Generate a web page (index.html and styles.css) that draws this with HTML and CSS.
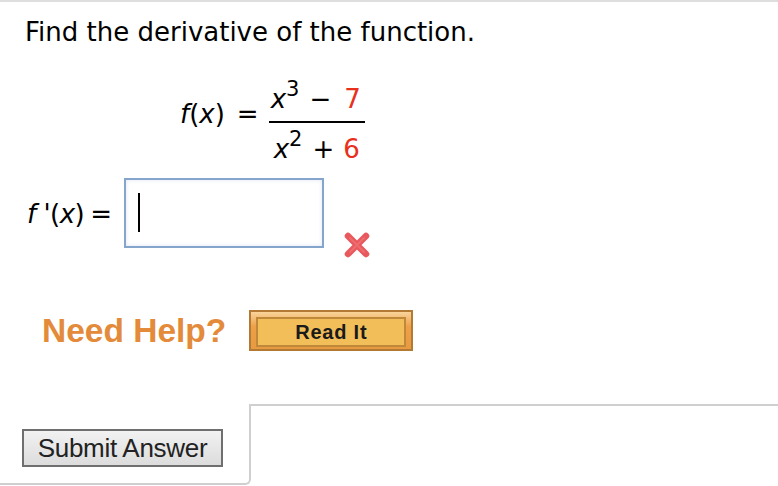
FILE: index.html
```html
<!DOCTYPE html>
<html>
<head>
<meta charset="utf-8">
<link rel="stylesheet" href="styles.css">
</head>
<body>
<div class="page">
  <p class="question">Find the derivative of the function.</p>
  <div class="given">
    <span class="lhs"><i>f</i>(<i>x</i>)<span class="eq">=</span></span>
    <span class="frac">
      <span class="num"><i>x</i><sup>3</sup><span class="op">−</span><span class="red">7</span></span>
      <span class="den"><i>x</i><sup>2</sup><span class="op">+</span><span class="red">6</span></span>
    </span>
  </div>
  <div class="answer">
    <span class="lhs2"><i>f</i> '(<i>x</i>)<span class="eq">=</span></span>
    <div class="box"><span class="caret"></span></div>
    <svg class="wrong" width="28" height="28" viewBox="0 0 28 28">
      <path d="M5 5 L23 23 M23 5 L5 23" stroke="#e9585c" stroke-width="6.5" stroke-linecap="round"/>
      <path d="M7 7 L21 21 M21 7 L7 21" stroke="#f07a7c" stroke-width="2" stroke-linecap="round" opacity="0.6"/>
    </svg>
  </div>
  <div class="help">
    <span class="need">Need Help?</span>
    <span class="readit"><span class="readit-inner">Read It</span></span>
  </div>
  <div class="bottom">
    <div class="left-tab">
      <button class="submit">Submit Answer</button>
    </div>
    <div class="right-tab"></div>
  </div>
</div>
</body>
</html>
```

FILE: styles.css
```css
html, body {
  margin: 0;
  padding: 0;
  background: #fff;
}
.page {
  width: 778px;
  height: 486px;
  border-top: 2px solid #dedede;
  box-sizing: border-box;
  overflow: hidden;
  font-family: "DejaVu Sans", Verdana, sans-serif;
  color: #000;
}
.question {
  margin: 0;
  padding: 14px 0 0 25px;
  font-size: 26px;
  line-height: 32px;
  height: 32px;
}
.given {
  display: flex;
  align-items: flex-start;
  margin: 36px 0 0 180px;
  font-size: 26px;
}
.lhs {
  margin-top: 15px;
  line-height: 30px;
  margin-right: 10px;
}
.eq {
  margin-left: 12px;
}
.frac {
  display: inline-flex;
  flex-direction: column;
  align-items: center;
}
.num, .den {
  line-height: 30px;
  display: block;
}
.num {
  border-bottom: 2px solid #000;
  padding: 0 4px 7px 2px;
}
.den {
  padding-top: 11px;
  height: 30px;
}
.op {
  margin: 0 9px 0 10px;
}
.num .op {
  margin: 0 13px 0 10px;
}
sup {
  font-size: 21px;
  vertical-align: 12px;
  line-height: 0;
}
.red {
  color: #e8301c;
}
.answer {
  display: flex;
  align-items: flex-start;
  margin: 14px 0 0 27px;
  font-size: 26px;
  height: 70px;
}
.lhs2 {
  margin-top: 21px;
  line-height: 30px;
  margin-right: 12px;
  letter-spacing: -0.5px;
}
.lhs2 .eq {
  margin-left: 6px;
}
.box {
  width: 200px;
  height: 70px;
  box-sizing: border-box;
  border: 2px solid #85a5cc;
  box-shadow: inset 0 0 4px #dfe7f2;
  position: relative;
}
.caret {
  position: absolute;
  left: 12px;
  top: 13px;
  width: 2px;
  height: 39px;
  background: #000;
}
.wrong {
  margin: 53px 0 0 19px;
  flex: none;
}
.help {
  display: flex;
  align-items: center;
  margin: 62px 0 0 42px;
  height: 41px;
}
.need {
  font-family: "Liberation Sans", Arial, sans-serif;
  font-weight: bold;
  font-size: 33.5px;
  line-height: 38px;
  color: #e38b3a;
}
.readit {
  margin-left: 23px;
  width: 164px;
  height: 41px;
  box-sizing: border-box;
  border: 2px solid #b27a35;
  background: linear-gradient(#f9d39a, #eda046 40%, #e89a40);
  padding: 5px 5px 2px 5px;
  display: flex;
}
.readit-inner {
  flex: 1;
  border: 2px solid #c0883a;
  background: #f2be5a;
  font-family: "Liberation Sans", Arial, sans-serif;
  font-weight: bold;
  font-size: 20px;
  letter-spacing: 0.8px;
  color: #1a1a1a;
  display: flex;
  align-items: center;
  justify-content: center;
}
.bottom {
  display: flex;
  margin-top: 53px;
}
.left-tab {
  width: 251px;
  height: 81px;
  box-sizing: border-box;
  border-right: 2px solid #cfcfcf;
  border-bottom: 2px solid #cfcfcf;
  border-bottom-right-radius: 6px;
  padding: 25px 0 0 22px;
}
.right-tab {
  flex: 1;
  border-top: 2px solid #cfcfcf;
  height: 80px;
}
.submit {
  width: 201px;
  height: 38px;
  border: 2px solid #6f6f6f;
  background: linear-gradient(#f2f2f2, #dcdcdc);
  font-family: "Liberation Sans", Arial, sans-serif;
  font-size: 26px;
  color: #222;
  padding: 0;
  letter-spacing: -0.3px;
}
```
